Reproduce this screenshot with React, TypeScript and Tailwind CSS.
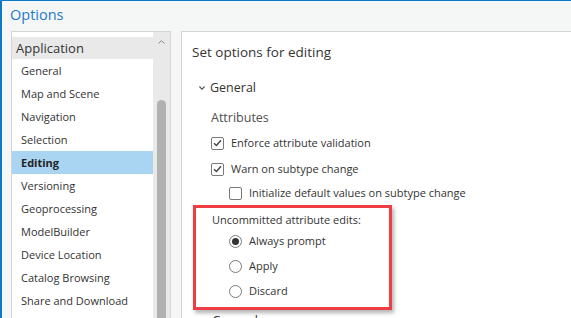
import React from 'react';

const items = [
  'General',
  'Map and Scene',
  'Navigation',
  'Selection',
  'Editing',
  'Versioning',
  'Geoprocessing',
  'ModelBuilder',
  'Device Location',
  'Catalog Browsing',
  'Share and Download',
];

function Checkbox({ checked }: { checked?: boolean }) {
  return (
    <div className="w-[13px] h-[13px] shrink-0 rounded-[2px] border border-[#7a7a7a] bg-white flex items-center justify-center">
      {checked && (
        <svg width="9" height="8" viewBox="0 0 9 8" fill="none">
          <path d="M1 4.2 3.4 6.5 8 1.2" stroke="#444" strokeWidth="1.4" />
        </svg>
      )}
    </div>
  );
}

function Radio({ checked }: { checked?: boolean }) {
  return (
    <div className="w-[13px] h-[13px] shrink-0 rounded-full border border-[#7a7a7a] bg-white flex items-center justify-center">
      {checked && <div className="w-[7px] h-[7px] rounded-full bg-[#333]" />}
    </div>
  );
}

export default function App() {
  return (
    <div className="w-[571px] h-[318px] overflow-hidden bg-[#f5f7f7] border-l-2 border-t border-[#0c79c7] flex flex-col font-['Open_Sans',sans-serif] text-[11px] text-[#333]">
      <div className="h-[30px] shrink-0 pl-[8px] pt-[3px] text-[14.5px] leading-[22px] text-[#2479c9]">Options</div>

      <div className="flex flex-1 min-h-0 gap-[10px] pl-[9px]">
        {/* Category list */}
        <div className="w-[160px] shrink-0 border border-b-0 border-[#d5d5d5] bg-white flex">
          <div className="flex-1 pt-[5px]">
            <div className="h-[22px] bg-[#e9e9e9] pl-[4px] text-[13px] leading-[22px] text-[#333]">Application</div>
            {items.map((it) => (
              <div
                key={it}
                className={`h-[23px] leading-[23px] pl-[9px] ${it === 'Editing' ? 'bg-[#a9d5f2] font-bold text-[#222]' : ''}`}
              >
                {it}
              </div>
            ))}
          </div>
          <div className="w-[17px] bg-[#e9e9e9] relative">
            <svg className="absolute left-[5px] top-[8px]" width="7" height="4" viewBox="0 0 7 4" fill="none">
              <path d="M0.5 3.5 3.5 0.7 6.5 3.5" stroke="#888" strokeWidth="1" />
            </svg>
            <div className="absolute left-[4px] top-[68px] w-[9px] h-[260px] rounded-full bg-[#b1b1b1]" />
          </div>
        </div>

        {/* Settings panel */}
        <div className="flex-1 border border-r-0 border-b-0 border-[#d5d5d5] bg-white pl-[10px] pt-[10px] flex flex-col">
          <div className="shrink-0 text-[13.5px] leading-[20px] text-[#333]">Set options for editing</div>

          <div className="shrink-0 mt-[16px] h-[20px] flex items-center text-[12.5px] text-[#333]">
            <svg className="ml-[7px] mr-[5px]" width="6" height="4" viewBox="0 0 6 4" fill="none">
              <path d="M0.4 0.5 3 3.2 5.6 0.5" stroke="#555" strokeWidth="1.1" />
            </svg>
            General
          </div>

          <div className="shrink-0 mt-[10px] ml-[19px] h-[20px] leading-[20px] text-[12.5px] text-[#4f4f4f]">Attributes</div>

          <div className="shrink-0 ml-[19px] mt-[2px] h-[26px] flex items-center gap-[7px]">
            <Checkbox checked />
            <span>Enforce attribute validation</span>
          </div>
          <div className="shrink-0 ml-[19px] h-[26px] flex items-center gap-[7px]">
            <Checkbox checked />
            <span>Warn on subtype change</span>
          </div>
          <div className="shrink-0 ml-[37px] h-[23px] flex items-center gap-[7px]">
            <Checkbox />
            <span>Initialize default values on subtype change</span>
          </div>

          <div className="ml-[1px] w-[199px] h-[105px] shrink-0 border-[3px] border-[#ee3e44] shadow-[2px_3px_4px_rgba(0,0,0,0.3)] pl-[16px] pt-[3px]">
            <div className="h-[18px] leading-[18px]">Uncommitted attribute edits:</div>
            <div className="ml-[17px] h-[25px] flex items-center gap-[7px]">
              <Radio checked />
              <span>Always prompt</span>
            </div>
            <div className="ml-[17px] h-[25px] flex items-center gap-[7px]">
              <Radio />
              <span>Apply</span>
            </div>
            <div className="ml-[17px] h-[25px] flex items-center gap-[7px]">
              <Radio />
              <span>Discard</span>
            </div>
          </div>

          <div className="shrink-0 ml-[20px] mt-[1px] text-[12.5px] leading-[20px] text-[#333]">General</div>
        </div>
      </div>
    </div>
  );
}
